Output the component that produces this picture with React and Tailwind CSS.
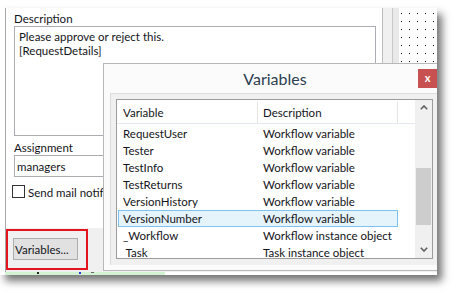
const rows = [
  ["RequestUser", "Workflow variable"],
  ["Tester", "Workflow variable"],
  ["TestInfo", "Workflow variable"],
  ["TestReturns", "Workflow variable"],
  ["VersionHistory", "Workflow variable"],
  ["VersionNumber", "Workflow variable", true],
  ["_Workflow", "Workflow instance object"],
  ["\u00a0Task", "Task instance object"],
];

function Chevron({ up }) {
  return (
    <svg width="8" height="5" viewBox="0 0 8 5" className="block">
      <path
        d={up ? "M0.8 4.2 L4 1 L7.2 4.2" : "M0.8 0.8 L4 4 L7.2 0.8"}
        fill="none"
        stroke="#606060"
        strokeWidth="1.6"
      />
    </svg>
  );
}

function DotGrid() {
  return (
    <svg width="38" height="220" className="block">
      <defs>
        <pattern id="dots" width="8" height="8" patternUnits="userSpaceOnUse">
          <rect x="2" y="5" width="1" height="1" fill="#000" />
        </pattern>
      </defs>
      <rect width="38" height="220" fill="url(#dots)" />
    </svg>
  );
}

function VariablesDialog() {
  return (
    <div className="absolute left-[103px] top-[55px] w-[334px] h-[208px] bg-[#fbfbfb] border-l border-t border-b border-[#b8b8b8] flex flex-col">
      {/* title bar */}
      <div className="relative shrink-0 h-[29px] flex items-center justify-center pl-[9px] pt-[1px] text-[16px] text-[#2d3e50]">
        Variables
        <div className="absolute right-0 top-[5px] w-[19px] h-[19px] bg-[#c75050] flex items-center justify-center text-white text-[11px] font-bold leading-none pb-[2px]">
          x
        </div>
      </div>

      {/* client area */}
      <div className="shrink-0 ml-[6px] h-[172px] bg-[#f0f0f0] border-l border-t border-[#dcdcdc] pl-[5px] pt-[5px]">
        <div className="w-[317px] h-[160px] border border-[#9c9c9c] bg-white flex overflow-hidden">
          <div className="w-[298px]">
            <div className="h-[24px] flex border-b border-[#e3e8ef] pt-[2px]">
              <div className="w-[141px] border-r border-[#e5e5e5] pl-[6px] flex items-center">Variable</div>
              <div className="w-[140px] border-r border-[#e5e5e5] pl-[5px] flex items-center">Description</div>
            </div>
            <div className="pt-[1px]">
              {rows.map(([name, desc, sel]) => (
                <div
                  key={name}
                  className={
                    "ml-[1px] w-[280px] h-[17px] flex items-center border " +
                    (sel ? "bg-[#e5f3fb] border-[#7fc2ef]" : "border-transparent")
                  }
                >
                  <div className="w-[139px] pl-[4px] whitespace-pre">{name}</div>
                  <div className="pl-[5px] whitespace-nowrap">{desc}</div>
                </div>
              ))}
            </div>
          </div>
          {/* scrollbar */}
          <div className="w-[17px] bg-[#f0f0f0] flex flex-col">
            <div className="h-[17px] shrink-0 flex items-center justify-center pb-[3px]">
              <Chevron up />
            </div>
            <div className="h-[51px] shrink-0" />
            <div className="mx-[1px] h-[57px] shrink-0 bg-[#cdcdcd]" />
            <div className="flex-1 flex items-end justify-center pb-[6px]">
              <Chevron />
            </div>
          </div>
        </div>
      </div>
    </div>
  );
}

export default function App() {
  return (
    <div
      className="w-[458px] h-[293px] bg-white pt-[8px] overflow-hidden text-[11.5px] text-[#141420]"
      style={{ fontFamily: 'Lato, "Noto Sans", sans-serif' }}
    >
      <div className="relative w-[437px] h-[267px] bg-white shadow-[5px_6px_8px_rgba(0,0,0,0.55)]">
        {/* form behind */}
        <div className="flex h-[220px]">
          <div className="w-[5px]" />
          <div className="w-[377px] border-l border-[#a9a9a9] pl-[8px] pt-[3px]">
            <div className="leading-[15px]">Description</div>
            <div className="w-[362px] h-[110px] border border-[#abadb3] px-[4px] pt-[3px] leading-[14px]">
              <div>Please approve or reject this.</div>
              <div>[RequestDetails]</div>
            </div>
            <div className="mt-[5px] leading-[14px]">Assignment</div>
            <div className="w-[362px] h-[22px] border border-[#abadb3] pl-[2px] pt-[1px] flex items-center">managers</div>
            <div className="mt-[8px] -ml-[2px] flex items-center h-[13px]">
              <div className="w-[13px] h-[13px] border border-[#333] bg-white" />
              <span className="ml-[3px] leading-[13px] pt-[1px] whitespace-nowrap">Send mail notific</span>
            </div>
          </div>
          <div className="w-[10px] border-l border-[#bdbdbd] bg-[#f0f0f0]" />
          <div className="w-[7px] border-l border-[#c8c8c8] bg-[#e9e9e9]" />
          <div className="w-[38px] bg-white">
            <DotGrid />
          </div>
        </div>

        {/* bottom bar */}
        <div className="ml-[5px] h-[44px] bg-[#f0f0f0] border-l border-[#a9a9a9] pt-[1px]">
          <div className="w-[82px] h-[41px] border-2 border-[#e3141c] pl-[5px] pt-[7px]">
            <div className="w-[65px] h-[22px] bg-[#e1e1e1] border border-[#adadad] pl-[1px] pt-[2px] flex items-center whitespace-nowrap">
              Variables...
            </div>
          </div>
        </div>

        {/* strip under the form */}
        <div className="ml-[5px] w-[160px] h-[3px] bg-[#d2f2d2] flex">
          <div className="ml-[32px] w-[2px] h-[2px] bg-[#222]" />
          <div className="ml-[40px] w-[2px] h-[2px] bg-[#2a3bd0]" />
          <div className="ml-[10px] w-[3px] h-[1px] bg-[#666]" />
        </div>

        <VariablesDialog />
      </div>
    </div>
  );
}
